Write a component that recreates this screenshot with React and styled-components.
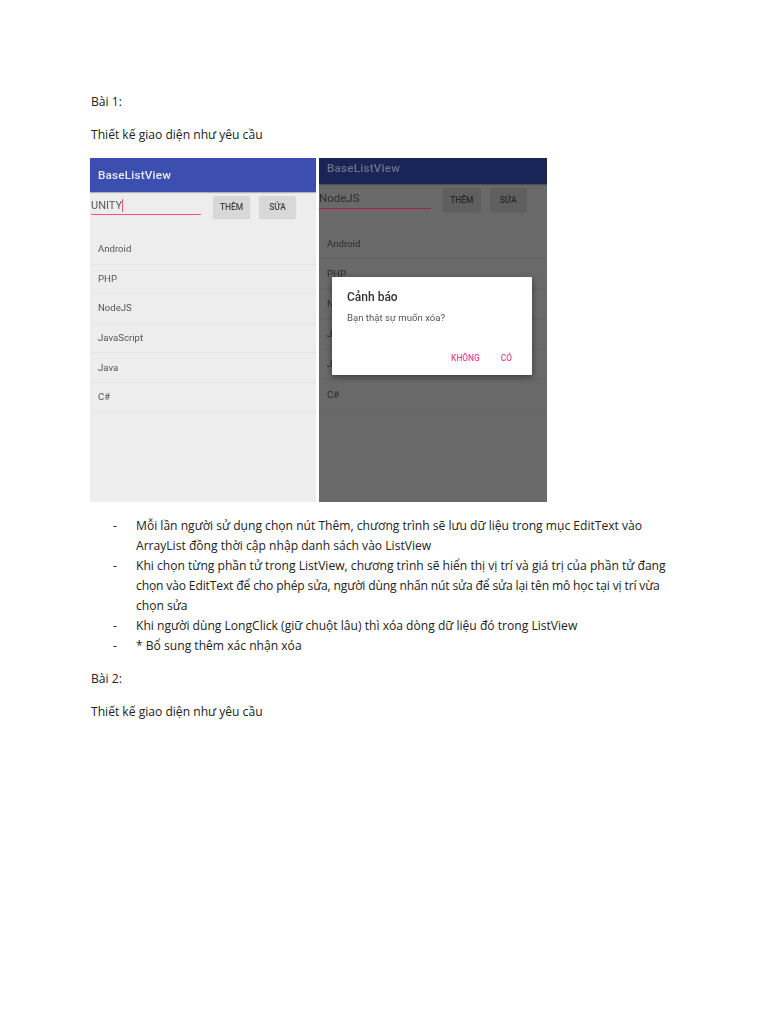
import React from "react";
import styled, { createGlobalStyle } from "styled-components";

const Global = createGlobalStyle`
  html, body { margin: 0; padding: 0; background: #fff; }
  body { font-family: "Open Sans", "Noto Sans", sans-serif; }
`;
const Page = styled.div`
  width: 768px; height: 1024px; box-sizing: border-box; padding: 92px 90px 0 91px; overflow: hidden;
  color: #222; font-size: 12.1px; line-height: 20px;
`;
const Para = styled.p`
  margin: 0 0 ${(p) => p.$after || 0}px; height: 20px; white-space: nowrap;
`;
const Shots = styled.div`
  display: flex; gap: 3px; margin: 0 0 14px -1px; height: 344px;
`;
const Phone = styled.div`
  position: relative; width: ${(p) => p.$w}px; height: 100%; overflow: hidden;
  background: ${(p) => (p.$dim ? "#696969" : "#ededed")};
  font-family: Roboto, sans-serif; color: ${(p) => (p.$dim ? "#2c2c2c" : "#555")};
  filter: blur(0.35px);
`;
const AppBar = styled.div`
  height: ${(p) => (p.$dim ? 26 : 34)}px; padding: ${(p) => (p.$dim ? "0 0 6px 8px" : "0 0 0 8px")};
  display: flex; align-items: center; box-sizing: border-box;
  background: ${(p) => (p.$dim ? "#1a2457" : "#3c4fb1")};
  color: ${(p) => (p.$dim ? "#6d7285" : "#e9ebf6")};
  font-size: 11.7px; font-weight: 500; letter-spacing: 0.2px;
  box-shadow: 0 1px 1px rgba(0,0,0,.25);
`;
const InputRow = styled.div`
  display: flex; align-items: flex-start; height: ${(p) => (p.$dim ? 45 : 43)}px;
  padding-top: 4px; box-sizing: border-box;
`;
const Field = styled.div`
  width: ${(p) => (p.$dim ? 112 : 110)}px; height: ${(p) => (p.$dim ? 20 : 18)}px;
  margin-left: ${(p) => (p.$dim ? 0 : 1)}px;
  border-bottom: 1px solid ${(p) => (p.$dim ? "#a81f4d" : "#f0538c")};
  font-size: ${(p) => (p.$dim ? 11.5 : 11)}px; line-height: 19px; color: ${(p) => (p.$dim ? "#2d2d2d" : "#5a5a5a")};
  display: flex; align-items: center;
`;
const Caret = styled.span`
  width: 1px; height: 13px; background: #f0538c;
`;
const Buttons = styled.div`
  display: flex; gap: 9px; margin-left: 12px;
`;
const Btn = styled.div`
  width: ${(p) => (p.$dim ? 37.5 : 37)}px; height: ${(p) => (p.$dim ? 24 : 22)}px; border-radius: 2px;
  display: flex; align-items: center; justify-content: center;
  font-size: 8.4px; font-weight: 500;
  background: ${(p) => (p.$dim ? "#5f5f5f" : "#d8d8d8")};
  color: ${(p) => (p.$dim ? "#272727" : "#444")};
  box-shadow: 0 1px 1px rgba(0,0,0,${(p) => (p.$dim ? 0.05 : 0.12)});
`;
const Item = styled.div`
  height: ${(p) => (p.$dim ? 30.2 : 29.6)}px; padding-left: 8px; box-sizing: border-box;
  display: flex; align-items: center; font-size: 9.6px;
  border-bottom: 1px solid ${(p) => (p.$dim ? "#646464" : "#e5e5e5")};
`;
const Dialog = styled.div`
  position: absolute; left: 13px; top: 119px; width: 200px; height: 98px; box-sizing: border-box;
  padding: 12px 15px 0; background: #fff; border-radius: 1px;
  box-shadow: 0 2px 6px rgba(0,0,0,.45); display: flex; flex-direction: column;
`;
const DialogTitle = styled.div`
  font-size: 12px; font-weight: 500; line-height: 16px; color: #333;
`;
const DialogText = styled.div`
  font-size: 9.6px; line-height: 14px; color: #555; margin-top: 6px;
`;
const DialogActions = styled.div`
  display: flex; justify-content: flex-end; gap: 21px; margin-top: 23px; padding-right: 5px;
`;
const DialogBtn = styled.span`
  font-size: 8.4px; font-weight: 500; color: #f5468b;
`;
const Bullets = styled.ul`
  list-style: none; margin: 0 0 13px; padding: 0 0 0 22px;
`;
const Bullet = styled.li`
  position: relative; padding-left: 23px; white-space: nowrap;
  &::before { content: "-"; position: absolute; left: 0; top: 0; }
`;
const TightLine = styled.span`
  letter-spacing: -0.15px;
`;

const items = ["Android", "PHP", "NodeJS", "JavaScript", "Java", "C#"];

function Screen({ dim, value, w }) {
  return (
    <Phone $dim={dim} $w={w}>
      <AppBar $dim={dim}>BaseListView</AppBar>
      <InputRow $dim={dim}>
        <Field $dim={dim}>{value}{!dim && <Caret />}</Field>
        <Buttons $dim={dim}>
          <Btn $dim={dim}>THÊM</Btn>
          <Btn $dim={dim}>SỬA</Btn>
        </Buttons>
      </InputRow>
      <div>
        {items.map((t) => <Item key={t} $dim={dim}>{t}</Item>)}
      </div>
      {dim && (
        <Dialog>
          <DialogTitle>Cảnh báo</DialogTitle>
          <DialogText>Bạn thật sự muốn xóa?</DialogText>
          <DialogActions>
            <DialogBtn>KHÔNG</DialogBtn>
            <DialogBtn>CÓ</DialogBtn>
          </DialogActions>
        </Dialog>
      )}
    </Phone>
  );
}

export default function App() {
  return (
    <Page>
      <Global />
      <Para $after={13}>Bài 1:</Para>
      <Para $after={13}>Thiết kế giao diện như yêu cầu</Para>
      <Shots>
        <Screen value="UNITY" w={226} />
        <Screen dim value="NodeJS" w={228} />
      </Shots>
      <Bullets>
        <Bullet>Mỗi lần người sử dụng chọn nút Thêm, chương trình sẽ lưu dữ liệu trong mục EditText vào<br />ArrayList đồng thời cập nhập danh sách vào ListView</Bullet>
        <Bullet>Khi chọn từng phần tử trong ListView, chương trình sẽ hiển thị vị trí và giá trị của phần tử đang<br /><TightLine>chọn vào EditText để cho phép sửa, người dùng nhấn nút sửa để sửa lại tên mô học tại vị trí vừa</TightLine><br />chọn sửa</Bullet>
        <Bullet>Khi người dùng LongClick (giữ chuột lâu) thì xóa dòng dữ liệu đó trong ListView</Bullet>
        <Bullet>* Bổ sung thêm xác nhận xóa</Bullet>
      </Bullets>
      <Para $after={13}>Bài 2:</Para>
      <Para>Thiết kế giao diện như yêu cầu</Para>
    </Page>
  );
}
